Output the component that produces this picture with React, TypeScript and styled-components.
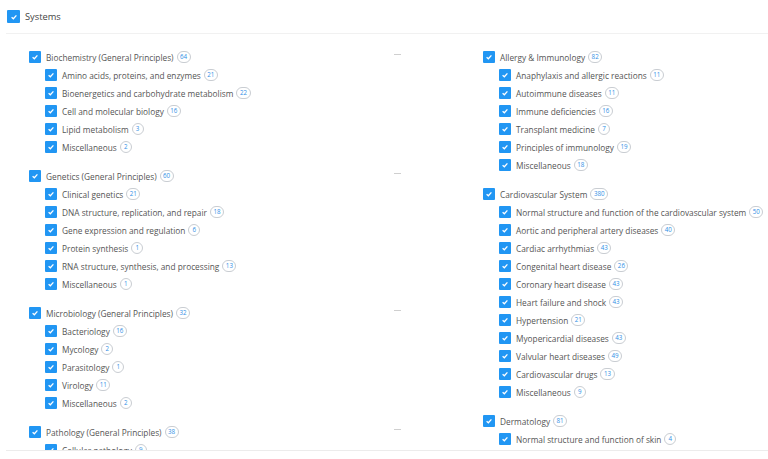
import React from 'react';
import styled, { createGlobalStyle } from 'styled-components';

type Topic = { name: string; count: number };
type Group = { name: string; count: number; topics: Topic[] };

const GlobalStyle = createGlobalStyle`
  html, body {
    margin: 0;
    padding: 0;
    background: #fff;
    overflow: hidden;
  }
  body {
    font-family: 'Open Sans', 'Liberation Sans', sans-serif;
    color: #555;
  }
`;

const leftColumn: Group[] = [
  {
    name: 'Biochemistry (General Principles)',
    count: 64,
    topics: [
      { name: 'Amino acids, proteins, and enzymes', count: 21 },
      { name: 'Bioenergetics and carbohydrate metabolism', count: 22 },
      { name: 'Cell and molecular biology', count: 16 },
      { name: 'Lipid metabolism', count: 3 },
      { name: 'Miscellaneous', count: 2 }
    ]
  },
  {
    name: 'Genetics (General Principles)',
    count: 60,
    topics: [
      { name: 'Clinical genetics', count: 21 },
      { name: 'DNA structure, replication, and repair', count: 18 },
      { name: 'Gene expression and regulation', count: 6 },
      { name: 'Protein synthesis', count: 1 },
      { name: 'RNA structure, synthesis, and processing', count: 13 },
      { name: 'Miscellaneous', count: 1 }
    ]
  },
  {
    name: 'Microbiology (General Principles)',
    count: 32,
    topics: [
      { name: 'Bacteriology', count: 16 },
      { name: 'Mycology', count: 2 },
      { name: 'Parasitology', count: 1 },
      { name: 'Virology', count: 11 },
      { name: 'Miscellaneous', count: 2 }
    ]
  },
  {
    name: 'Pathology (General Principles)',
    count: 38,
    topics: [
      { name: 'Cellular pathology', count: 9 },
      { name: 'Inflammation', count: 11 },
      { name: 'Neoplasia', count: 12 }
    ]
  }
];

const rightColumn: Group[] = [
  {
    name: 'Allergy & Immunology',
    count: 82,
    topics: [
      { name: 'Anaphylaxis and allergic reactions', count: 11 },
      { name: 'Autoimmune diseases', count: 11 },
      { name: 'Immune deficiencies', count: 16 },
      { name: 'Transplant medicine', count: 7 },
      { name: 'Principles of immunology', count: 19 },
      { name: 'Miscellaneous', count: 18 }
    ]
  },
  {
    name: 'Cardiovascular System',
    count: 380,
    topics: [
      { name: 'Normal structure and function of the cardiovascular system', count: 50 },
      { name: 'Aortic and peripheral artery diseases', count: 40 },
      { name: 'Cardiac arrhythmias', count: 43 },
      { name: 'Congenital heart disease', count: 26 },
      { name: 'Coronary heart disease', count: 43 },
      { name: 'Heart failure and shock', count: 43 },
      { name: 'Hypertension', count: 21 },
      { name: 'Myopericardial diseases', count: 43 },
      { name: 'Valvular heart diseases', count: 49 },
      { name: 'Cardiovascular drugs', count: 13 },
      { name: 'Miscellaneous', count: 9 }
    ]
  },
  {
    name: 'Dermatology',
    count: 81,
    topics: [
      { name: 'Normal structure and function of skin', count: 4 },
      { name: 'Skin infections', count: 12 }
    ]
  }
];

const Page = styled.div`
  padding-left: 6px;
  width: 762px;
`;

const Header = styled.div`
  display: flex;
  align-items: center;
  height: 33px;
  padding-left: 1px;
  border-bottom: 1px solid #f1f1f1;
  font-size: 9.3px;
  color: #444;
`;

const ScrollArea = styled.div`
  height: 402px;
  padding-top: 14px;
  padding-left: 23px;
  overflow: hidden;
  border-bottom: 1px solid #ececec;
  display: flex;
  align-items: flex-start;
`;

const Column = styled.div`
  flex: 0 0 454px;
  display: flex;
  flex-direction: column;
  gap: 11px;
`;

const GroupBlock = styled.div`
  display: flex;
  flex-direction: column;
  width: 372px;
`;

const Row = styled.div<{ $child?: boolean }>`
  display: flex;
  align-items: center;
  height: 18px;
  padding-left: ${(p) => (p.$child ? '16px' : '0')};
  white-space: nowrap;
  font-size: 8.3px;
  color: #555;
`;

const Box = styled.span<{ $size?: number }>`
  flex: 0 0 auto;
  display: inline-flex;
  align-items: center;
  justify-content: center;
  width: ${(p) => p.$size ?? 12}px;
  height: ${(p) => p.$size ?? 12}px;
  margin-right: 5px;
  background: #2196f3;
  border-radius: 1px;
`;

const Badge = styled.span`
  display: inline-flex;
  align-items: center;
  justify-content: center;
  height: 10px;
  min-width: 5px;
  padding: 0 2.5px;
  margin-left: 3px;
  border: 1px solid #c9cdd2;
  border-radius: 6px;
  font-size: 6.2px;
  color: #2f8fe6;
  line-height: 1;
`;

const Collapse = styled.span`
  margin-left: auto;
  margin-top: -5px;
  width: 7px;
  height: 1px;
  background: #cfcfcf;
`;

function Check({ size }: { size?: number }) {
  return (
    <Box $size={size}>
      <svg width="8" height="8" viewBox="0 0 10 10">
        <path d="M2 5.2 L4.2 7.2 L8 3" fill="none" stroke="#fff" strokeWidth="1.6" />
      </svg>
    </Box>
  );
}

function GroupList({ groups }: { groups: Group[] }) {
  return (
    <Column>
      {groups.map((g) => (
        <GroupBlock key={g.name}>
          <Row>
            <Check />
            {g.name}
            <Badge>{g.count}</Badge>
            <Collapse />
          </Row>
          {g.topics.map((t, i) => (
            <Row $child key={`${g.name}-${t.name}-${i}`}>
              <Check />
              {t.name}
              <Badge>{t.count}</Badge>
            </Row>
          ))}
        </GroupBlock>
      ))}
    </Column>
  );
}

export default function App() {
  return (
    <Page>
      <GlobalStyle />
      <Header>
        <Check size={13} />
        Systems
      </Header>
      <ScrollArea>
        <GroupList groups={leftColumn} />
        <GroupList groups={rightColumn} />
      </ScrollArea>
    </Page>
  );
}
